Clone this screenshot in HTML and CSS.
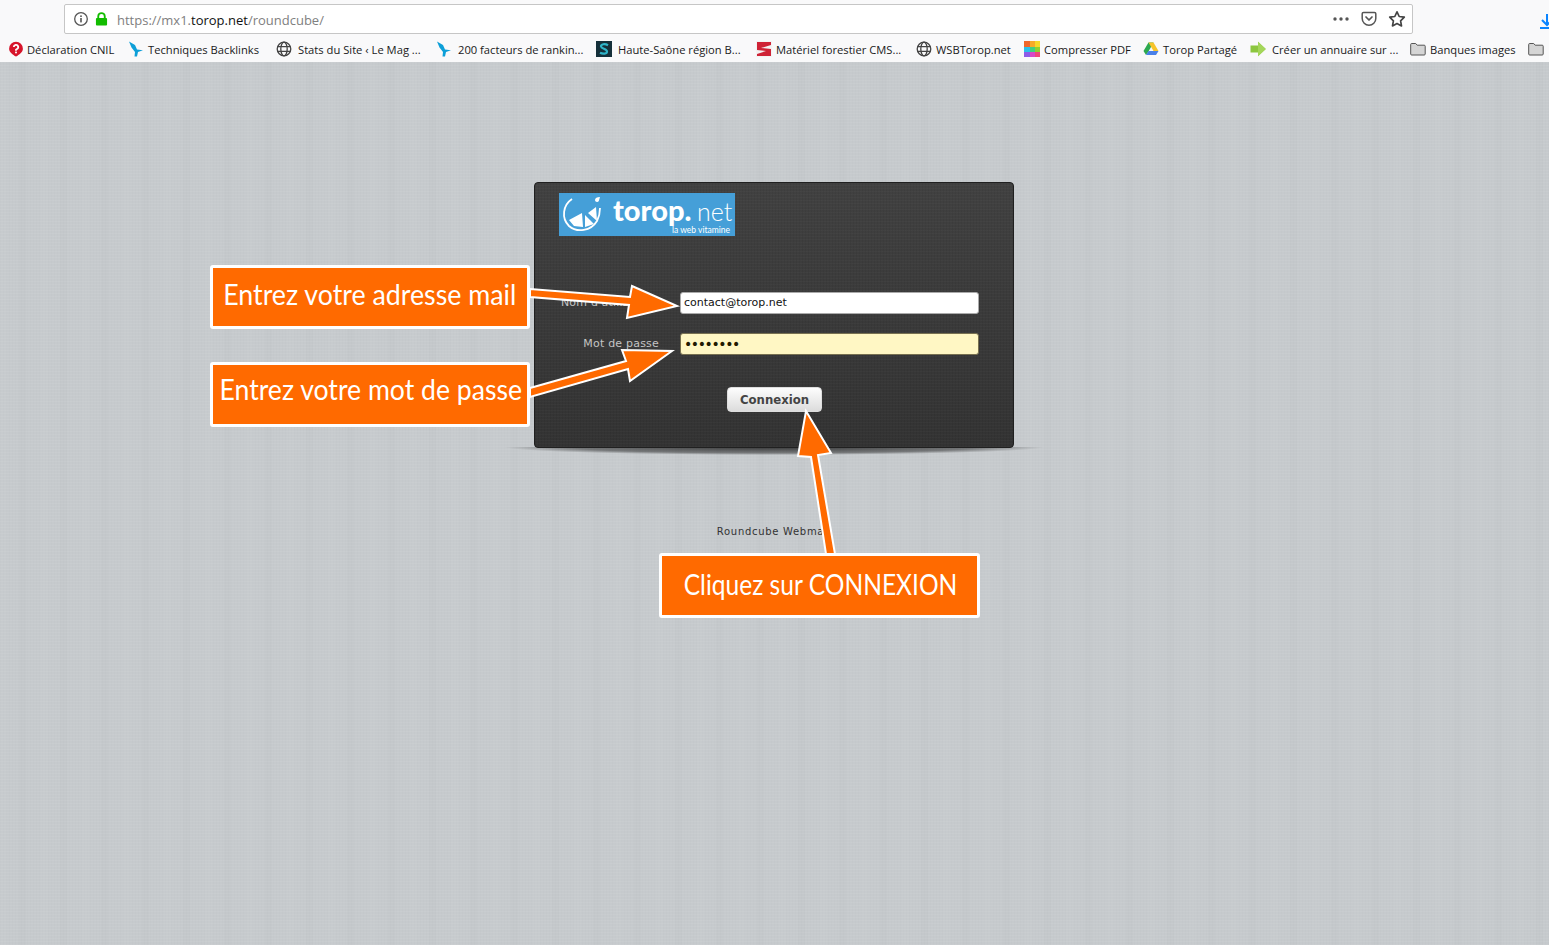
FILE: index.html
```html
<!DOCTYPE html>
<html lang="fr">
<head>
<meta charset="utf-8">
<title>Roundcube Webmail</title>
<link rel="stylesheet" href="styles.css">
</head>
<body>
<header class="browser">
  <div class="toolbar">
    <div class="urlbar">
      <svg class="ico-info" viewBox="0 0 16 16"><circle cx="8" cy="8" r="6.3" fill="none" stroke="#555" stroke-width="1.3"/><rect x="7.2" y="7" width="1.6" height="4.4" fill="#555"/><rect x="7.2" y="4.4" width="1.6" height="1.6" fill="#555"/></svg>
      <svg class="ico-lock" viewBox="0 0 14 15"><path d="M3.5 7V4.6a3.5 3.5 0 0 1 7 0V7" fill="none" stroke="#12bc00" stroke-width="2"/><rect x="1" y="6.5" width="12" height="8" rx="1" fill="#12bc00"/></svg>
      <span class="url">https://mx1.<b>torop.net</b>/roundcube/</span>
      <span class="url-actions">
        <svg class="ico-dots" viewBox="0 0 16 4"><circle cx="2" cy="2" r="1.7"/><circle cx="8" cy="2" r="1.7"/><circle cx="14" cy="2" r="1.7"/></svg>
        <svg class="ico-pocket" viewBox="0 0 16 16"><path d="M2.5 1.5h11a1.3 1.3 0 0 1 1.3 1.3v4.7a6.8 6.8 0 0 1-13.600 0V2.800a1.300 1.300 0 0 1 1.300-1.300z" fill="none" stroke="#555" stroke-width="1.500"/><path d="M5 6l3 3 3-3" fill="none" stroke="#555" stroke-width="1.700" stroke-linecap="round" stroke-linejoin="round"/></svg>
        <svg class="ico-star" viewBox="0 0 18 18"><path d="M9 1.800l2.200 4.700 5.100.7-3.700 3.600.9 5.100L9 13.500l-4.500 2.400.9-5.100L1.700 7.200l5.100-.7z" fill="none" stroke="#444" stroke-width="1.700" stroke-linejoin="round"/></svg>
      </span>
    </div>
    <svg class="ico-download" viewBox="0 0 14 16"><path d="M7 1v10M2 7l5 5 5-5" fill="none" stroke="#0a84ff" stroke-width="2"/><rect x="0" y="14" width="14" height="2" fill="#0a84ff"/></svg>
  </div>
  <nav class="bookmarks">
    <a class="bm bm-first"><svg viewBox="0 0 16 16"><path d="M8 .8a6.900 6.900 0 0 1 6.900 6.900c0 3.400-3.800 6-6.900 7.900-3.100-1.900-6.900-4.500-6.900-7.900A6.900 6.900 0 0 1 8 .8z" fill="#d7142a"/><path d="M5.800 6a2.200 2.200 0 1 1 3.200 2L8 8.800v1" fill="none" stroke="#fff" stroke-width="1.800"/><rect x="7.100" y="10.600" width="1.800" height="1.700" fill="#fff"/></svg><span>Déclaration CNIL</span></a>
    <a class="bm"><svg viewBox="0 0 16 16"><path d="M1 .5l6 3.500 2 4.500 6 .7-5 1.800-1 4.500H6.500L7 11 3.500 6.500z" fill="#0d9fd8"/></svg><span>Techniques Backlinks</span></a>
    <a class="bm bm-globe"><svg viewBox="0 0 16 16"><g fill="none" stroke="#444" stroke-width="1.300"><circle cx="8" cy="8" r="6.800"/><ellipse cx="8" cy="8" rx="3.200" ry="6.800"/><path d="M1.500 5.700h13M1.500 10.300h13"/></g></svg><span>Stats du Site ‹ Le Mag ...</span></a>
    <a class="bm bm-globe"><svg viewBox="0 0 16 16"><path d="M1 .5l6 3.500 2 4.500 6 .7-5 1.800-1 4.500H6.500L7 11 3.500 6.500z" fill="#0d9fd8"/></svg><span>200 facteurs de rankin...</span></a>
    <a class="bm bm-globe"><svg viewBox="0 0 16 16"><rect width="16" height="16" fill="#15303a"/><path d="M12 4.200C9 2.500 4.800 3 5 5.500c.2 2.500 6 2.200 6 5 0 2.500-4 2.800-7 1.300" fill="none" stroke="#2fb4c8" stroke-width="2.200"/></svg><span>Haute-Saône région B...</span></a>
    <a class="bm"><svg viewBox="0 0 16 16"><rect width="16" height="16" fill="#f3f3f3"/><path d="M1 1h14v3L5 7l10 1v7H1v-2l9-3L1 9z" fill="#cf2336"/></svg><span>Matériel forestier CMS...</span></a>
    <a class="bm"><svg viewBox="0 0 16 16"><g fill="none" stroke="#444" stroke-width="1.300"><circle cx="8" cy="8" r="6.800"/><ellipse cx="8" cy="8" rx="3.200" ry="6.800"/><path d="M1.500 5.700h13M1.500 10.300h13"/></g></svg><span>WSBTorop.net</span></a>
    <a class="bm"><svg viewBox="0 0 16 16"><rect width="6" height="6" fill="#f0672b"/><rect x="6" width="5" height="6" fill="#f7a928"/><rect x="11" width="5" height="6" fill="#f7d828"/><rect y="6" width="6" height="5" fill="#2cc0e8"/><rect x="6" y="6" width="5" height="5" fill="#40d080"/><rect x="11" y="6" width="5" height="5" fill="#90d030"/><rect y="11" width="6" height="5" fill="#8d5ce8"/><rect x="6" y="11" width="5" height="5" fill="#d848c8"/><rect x="11" y="11" width="5" height="5" fill="#f04878"/></svg><span>Compresser PDF</span></a>
    <a class="bm"><svg viewBox="0 0 16 16"><path d="M5.500 1.500h5L8 6 5.500 10.500 3 14 .5 10z" fill="#2da94f"/><path d="M5.500 1.500h5l5 8.500h-5z" fill="#f7c42a"/><path d="M3 14h10l2.500-4H5.500z" fill="#4a80e8"/></svg><span>Torop Partagé</span></a>
    <a class="bm bm-wide"><svg viewBox="0 0 16 16"><path d="M.5 4.500H8V.8L15.800 8 8 15.200v-3.700H.5z" fill="#8cc63f"/><path d="M8 .8L15.800 8 8 15.200z" fill="#a4d65a"/></svg><span>Créer un annuaire sur ...</span></a>
    <a class="bm"><svg viewBox="0 0 16 16"><path d="M.7 3.500a1 1 0 0 1 1-1h4l1.500 1.700h7a1 1 0 0 1 1 1v7.800a1 1 0 0 1-1 1H1.700a1 1 0 0 1-1-1z" fill="#d5d5d5" stroke="#555"/></svg><span>Banques images</span></a>
    <a class="bm"><svg viewBox="0 0 16 16"><path d="M.7 3.500a1 1 0 0 1 1-1h4l1.500 1.700h7a1 1 0 0 1 1 1v7.800a1 1 0 0 1-1 1H1.700a1 1 0 0 1-1-1z" fill="#d5d5d5" stroke="#555"/></svg></a>
  </nav>
</header>

<main class="page">
  <section class="login">
    <svg class="logo" viewBox="0 0 176 43" role="img" aria-label="torop.net">
      <rect width="176" height="43" fill="#459fd8"/>
      <path d="M13 6C4 12 2 25 10 33c8 7 22 5 28-5 2-4 3-8 3-13" fill="none" stroke="#fff" stroke-width="1.800"/>
      <path d="M10 27l13-7 1 14-9-1zM26 22l9 9-9 3zM29 20l8-6 1 14z" fill="#fff"/>
      <path d="M36 7c0-2 2-3 5-3-1 3-1 5-3 5-1 0-2-1-2-2z" fill="#fff"/>
      <text class="logo-main" x="54" y="28">torop.</text>
      <text class="logo-net" x="138" y="28">net</text>
      <text class="logo-sub" x="113" y="40">la web vitamine</text>
    </svg>
    <form class="login-form">
      <div class="row">
        <label class="row-label">Nom d'utilisateur</label>
        <div class="field">contact@torop.net</div>
      </div>
      <div class="row">
        <label class="row-label">Mot de passe</label>
        <div class="field field-pass">••••••••</div>
      </div>
      <div class="submit"><button class="btn" type="button">Connexion</button></div>
    </form>
  </section>
  <div class="login-shadow"></div>
  <p class="footer">Roundcube Webmail</p>

  <svg class="arrows" viewBox="0 0 1549 945">
    <polygon points="530,289 630,297 632,286 677,306 627,318 629,305 530,297"/>
    <polygon points="530,388 626,361 622,350 672,351 630,381 628,369 530,397"/>
    <polygon points="806,411 831,453 818,455 835,554 826,554 811,457 798,456"/>
  </svg>
  <div class="callout callout-mail"><span class="callout-text">Entrez votre adresse mail</span></div>
  <div class="callout callout-pass"><span class="callout-text">Entrez votre mot de passe</span></div>
  <div class="callout callout-go"><span class="callout-text">Cliquez sur CONNEXION</span></div>
</main>
</body>
</html>
```
FILE: styles.css
```css
* { box-sizing: border-box; }
html, body { margin: 0; height: 100%; overflow: hidden; }
body { width: 1549px; height: 945px; font-family: "DejaVu Sans", Verdana, sans-serif; display: flex; flex-direction: column; }

.browser { flex: none; height: 62px; background: #f9f9fa; font-family: "Open Sans", sans-serif; color: #222; }
.toolbar { height: 38px; padding: 4px 0 0 64px; display: flex; align-items: flex-start; overflow: hidden; }
.urlbar { flex: none; width: 1349px; height: 30px; background: #fff; border: 1px solid #c6c6c6; border-radius: 2px; display: flex; align-items: center; padding-left: 8px; }
.ico-info { width: 16px; height: 16px; }
.ico-lock { width: 13px; height: 14px; margin-left: 6px; }
.url { margin-left: 9px; font-size: 13px; color: #808080; position: relative; top: .5px; }
.url b { font-weight: 400; color: #111; }
.url-actions { margin-left: auto; display: flex; align-items: center; padding-right: 6px; }
.ico-dots { width: 16px; height: 4px; fill: #555; }
.ico-pocket { width: 16px; height: 16px; margin-left: 12px; }
.ico-star { width: 18px; height: 18px; margin-left: 11px; }
.ico-download { flex: none; width: 14px; height: 16px; margin: 9px 0 0 127px; }

.bookmarks { height: 22px; padding-left: 8px; display: grid; grid-template-columns: 120px 148px 160px 160px 160px 160px 108px 119px 107px 160px 118px 21px; align-items: center; }
.bm { display: flex; align-items: center; gap: 4px; font-size: 11.2px; white-space: nowrap; color: #1a1a1a; }
.bm svg { width: 16px; height: 16px; flex: none; }
.bm-first { gap: 3px; }
.bm-globe, .bm-wide { gap: 6px; }

.page { flex: 1; position: relative; background-color: #c6cacd;
  background-image:
    repeating-linear-gradient(0deg, rgba(255,255,255,.05) 0 1px, transparent 1px 3px),
    repeating-linear-gradient(90deg, rgba(0,0,0,.012) 0 1px, transparent 1px 3px),
    repeating-linear-gradient(90deg, rgba(255,255,255,.02) 0 7px, transparent 7px 19px, rgba(0,0,0,.012) 19px 26px, transparent 26px 41px);
  padding: 120px 1px 0 0; }

.login { position: relative; width: 480px; height: 266px; margin: 0 auto; padding: 10px 24px 0; border: 1px solid #202020; border-radius: 4px;
  background-color: #383838;
  background-image:
    repeating-linear-gradient(0deg, rgba(255,255,255,.02) 0 1px, transparent 1px 3px),
    repeating-linear-gradient(90deg, rgba(0,0,0,.05) 0 1px, transparent 1px 3px),
    linear-gradient(180deg, #414141, #333); }
.logo { display: block; width: 176px; height: 43px; }
.logo-main { font: 900 29px Lato, sans-serif; fill: #fff; }
.logo-net { font: 300 25px Lato, sans-serif; fill: #fff; }
.logo-sub { font: 400 8.5px Lato, sans-serif; fill: #fff; }

.login-form { margin-top: 55px; }
.row { display: flex; align-items: center; height: 23px; margin-bottom: 18px; margin-left: -24px; }
.row-label { width: 124px; text-align: right; font-size: 11px; letter-spacing: .2px; color: #c4c4c4; flex: none; }
.field { width: 299px; height: 22px; margin-left: 21px; padding-left: 3px; background: #fff; border: 1px solid #aaa; border-radius: 3px; font-size: 11px; line-height: 20px; color: #111; }
.field-pass { background: #fff7c4; border-color: #777050; letter-spacing: -1.4px; color: #221a00; font-size: 14px; }
.submit { display: flex; justify-content: flex-start; padding-left: 168px; margin-top: 32px; }
.btn { width: 95px; height: 25px; padding: 0; border: 1px solid #ddd; border-radius: 4px; background: linear-gradient(180deg, #fdfdfd, #dcdcdc); font: 700 11.7px "DejaVu Sans", Verdana, sans-serif; color: #444; }

.login-shadow { width: 540px; height: 8px; margin: -1px auto 0; background: radial-gradient(ellipse 50% 100% at 50% 0, rgba(20,20,20,.8), rgba(20,20,20,.45) 75%, transparent 100%); }
.footer { margin: 71px 0 0; text-align: center; font-size: 10px; letter-spacing: .7px; color: #333; }

.arrows { position: absolute; left: 0; top: -62px; width: 1549px; height: 945px; pointer-events: none; }
.arrows polygon { fill: #ff6a00; stroke: #fff; stroke-width: 2; stroke-linejoin: miter; }

.callout { position: absolute; display: flex; align-items: center; justify-content: center; background: #ff6a00; border: 3px solid #fff; border-radius: 3px; color: #fff; font-family: Lato, sans-serif; font-size: 29px; white-space: nowrap; }
.callout-text { display: block; }
.callout-mail { left: 210px; top: 203px; width: 320px; height: 64px; padding-bottom: 8px; }
.callout-mail .callout-text { transform: scaleX(.923); }
.callout-pass { left: 210px; top: 300px; width: 320px; height: 65px; padding: 0 0 13px 2px; }
.callout-pass .callout-text { transform: scaleX(.918); }
.callout-go { left: 659px; top: 491px; width: 321px; height: 65px; padding: 0 0 5px 3px; }
.callout-go .callout-text { transform: scaleX(.847); }
```
